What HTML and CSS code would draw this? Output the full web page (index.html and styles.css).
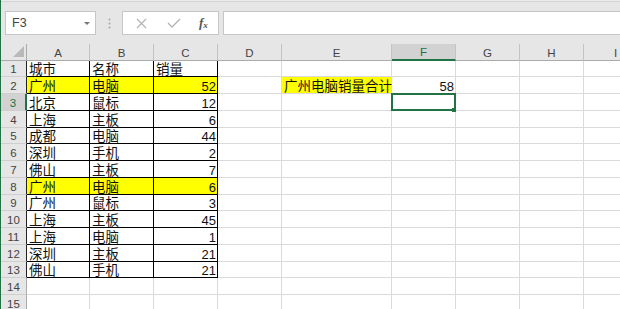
FILE: index.html
```html
<!DOCTYPE html>
<html lang="zh-CN">
<head>
<meta charset="utf-8">
<title>Excel</title>
<link rel="stylesheet" href="styles.css">
</head>
<body>
<div class="app">
  <div class="ribbon-edge"></div>
  <div class="fbar">
    <div class="namebox"><span class="nb-text">F3</span><span class="nb-arrow"></span></div>
    <div class="grip">
      <svg width="3" height="11" viewBox="0 0 3 11"><circle cx="1.5" cy="1.5" r="1" fill="#a8a8a8"/><circle cx="1.5" cy="5.5" r="1" fill="#a8a8a8"/><circle cx="1.5" cy="9.5" r="1" fill="#a8a8a8"/></svg>
    </div>
    <div class="fbtns">
      <svg class="ico-x" width="11" height="11" viewBox="0 0 11 11"><path d="M1 1 L10 10 M10 1 L1 10" stroke="#b3b3b3" stroke-width="1.2" fill="none"/></svg>
      <svg class="ico-ok" width="14" height="10" viewBox="0 0 14 10"><path d="M1 5 L5 9 L13 1" stroke="#b3b3b3" stroke-width="1.3" fill="none"/></svg>
      <span class="fx"><i>f</i><sub>x</sub></span>
    </div>
    <div class="finput"></div>
  </div>
  <div class="sheet">
    <div class="corner"><svg width="11" height="11" viewBox="0 0 11 11"><path d="M11 0 L11 11 L0 11 Z" fill="#b9b9b9"/></svg></div>
    <div class="ch">A</div><div class="ch">B</div><div class="ch">C</div><div class="ch">D</div><div class="ch">E</div><div class="ch on">F</div><div class="ch">G</div><div class="ch">H</div><div class="ch">I</div>

    <div class="rh t">1</div><div class="c t">城市</div><div class="c t">名称</div><div class="c t">销量</div><div class="c"></div><div class="c"></div><div class="c"></div><div class="c"></div><div class="c"></div><div class="c"></div>
    <div class="rh t">2</div><div class="c t y">广州</div><div class="c t y">电脑</div><div class="c t y n">52</div><div class="c"></div><div class="c y">广州电脑销量合计</div><div class="c n">58</div><div class="c"></div><div class="c"></div><div class="c"></div>
    <div class="rh t on">3</div><div class="c t">北京</div><div class="c t">鼠标</div><div class="c t n">12</div><div class="c"></div><div class="c"></div><div class="c sel"></div><div class="c"></div><div class="c"></div><div class="c"></div>
    <div class="rh t">4</div><div class="c t">上海</div><div class="c t">主板</div><div class="c t n">6</div><div class="c"></div><div class="c"></div><div class="c"></div><div class="c"></div><div class="c"></div><div class="c"></div>
    <div class="rh t">5</div><div class="c t">成都</div><div class="c t">电脑</div><div class="c t n">44</div><div class="c"></div><div class="c"></div><div class="c"></div><div class="c"></div><div class="c"></div><div class="c"></div>
    <div class="rh t">6</div><div class="c t">深圳</div><div class="c t">手机</div><div class="c t n">2</div><div class="c"></div><div class="c"></div><div class="c"></div><div class="c"></div><div class="c"></div><div class="c"></div>
    <div class="rh t">7</div><div class="c t">佛山</div><div class="c t">主板</div><div class="c t n">7</div><div class="c"></div><div class="c"></div><div class="c"></div><div class="c"></div><div class="c"></div><div class="c"></div>
    <div class="rh t">8</div><div class="c t y">广州</div><div class="c t y">电脑</div><div class="c t y n">6</div><div class="c"></div><div class="c"></div><div class="c"></div><div class="c"></div><div class="c"></div><div class="c"></div>
    <div class="rh t">9</div><div class="c t">广州</div><div class="c t">鼠标</div><div class="c t n">3</div><div class="c"></div><div class="c"></div><div class="c"></div><div class="c"></div><div class="c"></div><div class="c"></div>
    <div class="rh t">10</div><div class="c t">上海</div><div class="c t">主板</div><div class="c t n">45</div><div class="c"></div><div class="c"></div><div class="c"></div><div class="c"></div><div class="c"></div><div class="c"></div>
    <div class="rh t">11</div><div class="c t">上海</div><div class="c t">电脑</div><div class="c t n">1</div><div class="c"></div><div class="c"></div><div class="c"></div><div class="c"></div><div class="c"></div><div class="c"></div>
    <div class="rh t">12</div><div class="c t">深圳</div><div class="c t">主板</div><div class="c t n">21</div><div class="c"></div><div class="c"></div><div class="c"></div><div class="c"></div><div class="c"></div><div class="c"></div>
    <div class="rh t">13</div><div class="c t">佛山</div><div class="c t">手机</div><div class="c t n">21</div><div class="c"></div><div class="c"></div><div class="c"></div><div class="c"></div><div class="c"></div><div class="c"></div>
    <div class="rh">14</div><div class="c"></div><div class="c"></div><div class="c"></div><div class="c"></div><div class="c"></div><div class="c"></div><div class="c"></div><div class="c"></div><div class="c"></div>
    <div class="rh">15</div><div class="c"></div><div class="c"></div><div class="c"></div><div class="c"></div><div class="c"></div><div class="c"></div><div class="c"></div><div class="c"></div><div class="c"></div>
  </div>
</div>
</body>
</html>
```

FILE: styles.css
```css
* { box-sizing: border-box; }
html, body { margin: 0; padding: 0; }
body { width: 620px; height: 309px; overflow: hidden; background: #e6e6e6; }

.app {
  width: 620px;
  height: 309px;
  overflow: hidden;
  border-left: 1px solid #217346;
  background: #e6e6e6;
  font-family: "Liberation Sans", "Noto Sans CJK SC", sans-serif;
}

.ribbon-edge {
  height: 11px;
  background: linear-gradient(#ebebeb 0 1px, #d4d4d4 1px 2px, #e6e6e6 2px);
}

.fbar {
  display: flex;
  height: 24px;
  margin-bottom: 9px;
  padding-left: 4px;
}

.namebox {
  width: 91px;
  background: #fff;
  border: 1px solid #c6c6c6;
  display: flex;
  align-items: center;
  justify-content: space-between;
  padding: 0 5px 0 6px;
}
.nb-text { font-family: "Liberation Sans", sans-serif; font-size: 12.5px; color: #444; }
.nb-arrow {
  width: 0; height: 0;
  border-left: 3px solid transparent;
  border-right: 3px solid transparent;
  border-top: 3px solid #777;
  margin-top: 1px;
}

.grip {
  width: 26px;
  display: flex;
  align-items: center;
  justify-content: center;
}

.fbtns {
  width: 97px;
  background: #fff;
  border: 1px solid #c6c6c6;
  display: flex;
  align-items: center;
  padding-left: 13px;
}
.ico-x { margin-right: 20px; }
.ico-ok { margin-right: 18px; }
.fx {
  font-family: "Liberation Serif", serif;
  font-weight: bold;
  font-size: 13px;
  color: #555;
  line-height: 1;
}
.fx i { font-style: italic; }
.fx sub { font-size: 9px; font-style: italic; vertical-align: -1px; }

.finput {
  flex: 1;
  margin-left: 4px;
  background: #fff;
  border: 1px solid #c6c6c6;
  border-right: none;
}

.sheet {
  display: grid;
  grid-template-columns: 26px 63px 64px 64px 64px 110px 64px 64px 64px 64px;
  grid-template-rows: 17px 16px 17px 17px 17px 16px 17px 17px 17px 16px 17px 17px 17px 16px 17px 17px;
  width: 700px;
}

.corner {
  background: #e6e6e6;
  border-right: 1px solid #ababab;
  border-bottom: 1px solid #ababab;
  display: flex;
  align-items: flex-end;
  justify-content: flex-end;
  padding: 0 2px 3px 0;
}
.corner svg { display: block; }

.ch {
  background: #e6e6e6;
  border-right: 1px solid #c3c3c3;
  border-bottom: 1px solid #ababab;
  font-family: "Liberation Sans", sans-serif;
  font-size: 11.5px;
  color: #444;
  display: flex;
  align-items: center;
  justify-content: center;
  padding-top: 1px;
}
.ch.on {
  background: #d2d2d2;
  color: #217346;
  border-bottom: 2px solid #217346;
}

.rh {
  background: #e6e6e6;
  border-right: 1px solid #ababab;
  border-bottom: 1px solid #cfcfcf;
  font-family: "Liberation Sans", sans-serif;
  font-size: 11.5px;
  color: #444;
  display: flex;
  align-items: center;
  justify-content: center;
  padding-top: 1px;
}
.rh.t { border-right-color: #222; }
.rh.on {
  background: #d2d2d2;
  color: #217346;
  border-right: 2px solid #217346;
}

.c {
  background: #fff;
  border-right: 1px solid #dadada;
  border-bottom: 1px solid #dadada;
  font-size: 13.5px;
  color: #111;
  display: flex;
  align-items: center;
  padding: 2px 0 0 2px;
  white-space: nowrap;
  line-height: 15px;
}
.c.t { border-right-color: #000; border-bottom-color: #000; }
.c.y { background: #ffff00; }
.c.n { justify-content: flex-end; padding: 2px 1px 0 0; font-size: 13px; }

.c.sel { position: relative; z-index: 2; }
.c.sel::after {
  content: "";
  position: absolute;
  top: -1px; left: -1px; right: -1px; bottom: -1px;
  border: 2px solid #217346;
}
.c.sel::before {
  content: "";
  position: absolute;
  right: -1px; bottom: -2px;
  width: 4px; height: 4px;
  background: #217346;
  z-index: 1;
}
```
